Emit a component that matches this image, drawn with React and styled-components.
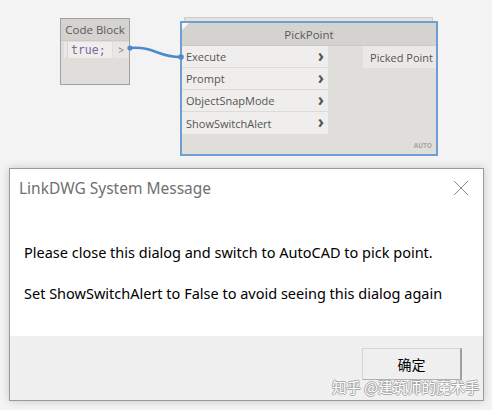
import styled, { createGlobalStyle } from 'styled-components';

const GlobalStyle = createGlobalStyle`
  html, body {
    margin: 0;
    padding: 0;
    background: #f3f3f3;
  }
  * {
    box-sizing: border-box;
  }
`;

const inputs = ['Execute', 'Prompt', 'ObjectSnapMode', 'ShowSwitchAlert'];

const App = () => {
  return (
    <Page>
      <GlobalStyle />
      <Canvas>
        <CodeBlock>
          <NodeHeader>Code Block</NodeHeader>
          <CodeRow>
            <Notch />
            <CodeText>true;</CodeText>
            <CodePort>&gt;</CodePort>
          </CodeRow>
        </CodeBlock>

        <StackShadow />
        <PickNode>
          <Corner />
          <NodeHeader $height={23}>PickPoint</NodeHeader>
          <NodeBody>
            <InputColumn>
              {inputs.map((name) => (
                <InputRow key={name}>
                  <span>{name}</span>
                  <Chevron>›</Chevron>
                </InputRow>
              ))}
            </InputColumn>
            <OutputColumn>
              <OutputPort>Picked Point</OutputPort>
            </OutputColumn>
          </NodeBody>
          <Lacing>AUTO</Lacing>
        </PickNode>

        <Wire width="492" height="160">
          <path d="M129 48 C 156 46, 156 57, 181 57" fill="none" stroke="#4a8ccb" strokeWidth="2.6" />
          <circle cx="130" cy="48" r="2.6" fill="#4a8ccb" />
          <circle cx="181" cy="57" r="2.8" fill="#4a8ccb" />
        </Wire>
      </Canvas>

      <Dialog>
        <TitleBar>
          <Title>LinkDWG System Message</Title>
          <CloseIcon width="16" height="16" viewBox="0 0 16 16">
            <path d="M1 1 L15 15 M15 1 L1 15" stroke="#8a8a8a" strokeWidth="1" fill="none" />
          </CloseIcon>
        </TitleBar>
        <Body>
          <Message>Please close this dialog and switch to AutoCAD to pick point.</Message>
          <Message>Set ShowSwitchAlert to False to avoid seeing this dialog again</Message>
        </Body>
        <Footer>
          <OkButton>确定</OkButton>
        </Footer>
        <Watermark>知乎 @建筑师的魔术手</Watermark>
      </Dialog>
    </Page>
  );
};

export default App;

const Page = styled.div`
  width: 492px;
  height: 410px;
  display: flex;
  flex-direction: column;
  background: #f3f3f3;
  overflow: hidden;
`;

const Canvas = styled.div`
  position: relative;
  height: 168px;
  flex-shrink: 0;
  font-family: 'Open Sans', 'Noto Sans', sans-serif;
`;

const CodeBlock = styled.div`
  position: absolute;
  left: 60px;
  top: 18px;
  width: 70px;
  height: 67px;
  background: #e0dedb;
  border: 1px solid #a3a19e;
  display: flex;
  flex-direction: column;
`;

const NodeHeader = styled.div`
  height: ${(p) => p.$height || 22}px;
  background: #d5d3d0;
  color: #5a5a5a;
  font-size: 11.5px;
  display: flex;
  align-items: center;
  justify-content: center;
  border-bottom: 1px solid #cbc9c6;
`;

const CodeRow = styled.div`
  display: flex;
  height: 16px;
  margin-top: 1px;
`;

const Notch = styled.div`
  width: 4px;
  margin-left: 3px;
  background: #ebe9e6;
  border-right: 1px solid #d6d4d1;
`;

const CodeText = styled.div`
  width: 44px;
  background: #efeeec;
  color: #7b67a0;
  font-family: 'DejaVu Sans Mono', 'Liberation Mono', monospace;
  font-size: 11.5px;
  display: flex;
  align-items: center;
  padding-left: 3px;
`;

const CodePort = styled.div`
  flex: 1;
  margin-left: 1px;
  background: #e9e7e4;
  color: #777;
  font-size: 10px;
  display: flex;
  align-items: center;
  justify-content: center;
`;

const StackShadow = styled.div`
  position: absolute;
  left: 184px;
  top: 17px;
  width: 249px;
  height: 10px;
  background: #e4e2df;
  border: 1px solid #cfcdca;
`;

const PickNode = styled.div`
  position: absolute;
  left: 180px;
  top: 21px;
  width: 258px;
  height: 135px;
  background: #e0dedb;
  border: 2px solid #6e9fd2;
  display: flex;
  flex-direction: column;
`;

const Corner = styled.div`
  position: absolute;
  left: 0;
  top: 0;
  width: 0;
  height: 0;
  border-top: 7px solid #f7f7f7;
  border-right: 7px solid transparent;
`;

const NodeBody = styled.div`
  display: flex;
  justify-content: space-between;
`;

const InputColumn = styled.div`
  width: 146px;
  display: flex;
  flex-direction: column;
`;

const InputRow = styled.div`
  height: 22px;
  background: #efeeec;
  border-bottom: 1px solid #dddbd8;
  color: #555;
  font-size: 11px;
  display: flex;
  align-items: center;
  justify-content: space-between;
  padding: 0 4px 0 4px;

  &:last-child {
    border-bottom: none;
  }
`;

const Chevron = styled.span`
  font-size: 17px;
  font-weight: 700;
  color: #555;
  line-height: 1;
  margin-top: -3px;
`;

const OutputColumn = styled.div`
  display: flex;
  flex-direction: column;
`;

const OutputPort = styled.div`
  width: 73px;
  height: 22px;
  background: #ebe9e6;
  color: #555;
  font-size: 11px;
  display: flex;
  align-items: center;
  justify-content: flex-end;
  padding-right: 3px;
`;

const Lacing = styled.div`
  margin-top: auto;
  align-self: flex-end;
  font-size: 6.5px;
  font-weight: 700;
  color: #a5a5a5;
  padding: 0 4px 4px 0;
`;

const Wire = styled.svg`
  position: absolute;
  left: 0;
  top: 0;
  pointer-events: none;
`;

const Dialog = styled.div`
  position: relative;
  margin-left: 9px;
  width: 475px;
  height: 233px;
  background: #ffffff;
  border: 1px solid #9a9a9a;
  box-shadow: 0 0 8px rgba(0, 0, 0, 0.18);
  display: flex;
  flex-direction: column;
  font-family: 'Noto Sans', 'Open Sans', sans-serif;
`;

const TitleBar = styled.div`
  height: 37px;
  display: flex;
  align-items: center;
  justify-content: space-between;
  padding: 0 14px 0 9px;
`;

const Title = styled.div`
  font-size: 15.5px;
  color: #707070;
  margin-top: 1px;
`;

const CloseIcon = styled.svg`
  margin-top: 1px;
`;

const Body = styled.div`
  flex: 1;
  padding: 36px 0 0 14px;
  display: flex;
  flex-direction: column;
  gap: 21px;
`;

const Message = styled.div`
  font-size: 14.5px;
  line-height: 20px;
  color: #000;
`;

const Footer = styled.div`
  height: 64px;
  background: #f0f0f0;
  display: flex;
  justify-content: flex-end;
  align-items: flex-start;
  padding: 12px 21px 0 0;
`;

const OkButton = styled.button`
  width: 100px;
  height: 32px;
  background: #efefef;
  border: 1px solid #d4d4d4;
  border-right: 2px solid #a0a0a0;
  border-bottom: 1px solid #b0b0b0;
  font-family: 'Noto Sans CJK SC', sans-serif;
  font-size: 14px;
  color: #000;
  padding: 0;
`;

const Watermark = styled.div`
  position: absolute;
  left: 322px;
  top: 210px;
  font-family: 'Noto Sans CJK SC', sans-serif;
  font-size: 14.5px;
  line-height: 16px;
  color: #ffffff;
  white-space: nowrap;
  text-shadow: 1px 0 0 #a8a8a8, -1px 0 0 #a8a8a8, 0 1px 0 #a8a8a8, 0 -1px 0 #a8a8a8;
`;
